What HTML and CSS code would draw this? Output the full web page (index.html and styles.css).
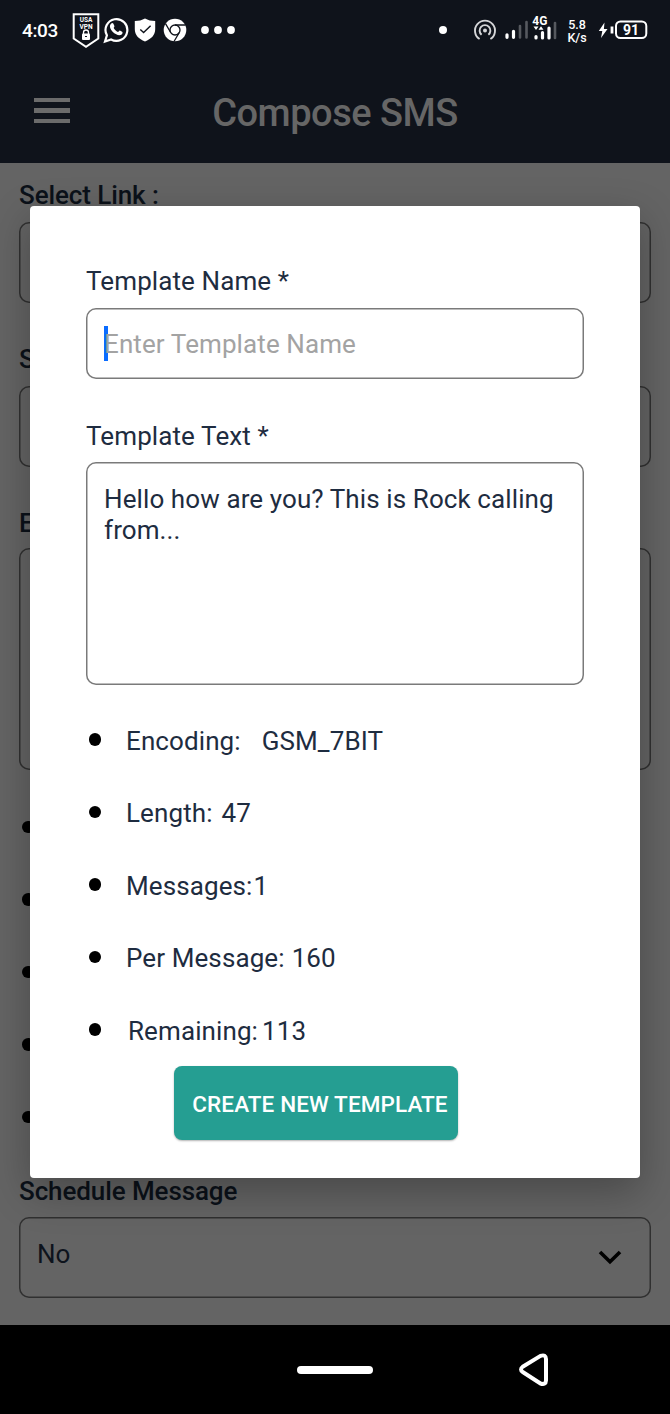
FILE: index.html
```html
<!DOCTYPE html>
<html lang="en">
<head>
    <meta charset="UTF-8">
    <title>Compose SMS</title>
    <link rel="stylesheet" href="styles.css">
</head>
<body>
    <div class="phone">
        <div class="status-bar">
            <span class="clock">4:03</span>
            <svg class="icon-vpn" width="28" height="36" viewBox="0 0 28 36">
                <path d="M1.7 1.2h24.6v24.3L14 33.8 1.7 25.500z" fill="none" stroke="#fff" stroke-width="2"/>
                <text x="14" y="9.300" class="vpn-text">USA</text>
                <text x="14" y="15.600" class="vpn-text">VPN</text>
                <path d="M11.500 21v-1.500a2.500 2.500 0 0 1 5 0V21" fill="none" stroke="#fff" stroke-width="1.300"/>
                <rect x="10" y="20.500" width="8" height="6.500" rx="1" fill="#fff"/>
                <path d="M13 23.500h2" stroke="#0f131b" stroke-width="1"/>
            </svg>
            <svg class="icon-whatsapp" width="26" height="28" viewBox="0 0 26 28">
                <path d="M2 25.500l1.900-6.200a10.900 10.900 0 1 1 4.200 4.200z" fill="none" stroke="#fff" stroke-width="2.200"/>
                <path d="M8.200 7.600c.8-.9 1.700-.8 2.200.1l1 2.200c.3.600-.9 1.700-.7 2.100 1 1.900 2.300 3.100 4.200 3.900.6.200 1.400-1.600 2-1.300l2.200 1.100c.8.400.5 2-.4 2.700-1.500 1.200-3.600.9-5.500-.100-2.700-1.400-4.900-3.700-6-6.400-.6-1.600-.2-3.200 1-4.300z" fill="#fff"/>
            </svg>
            <svg class="icon-shield" width="22" height="24" viewBox="0 0 22 24">
                <path d="M11 .6c3 1.700 6.300 2.500 10.200 2.500v8.200c0 5.800-4 9.800-10.200 12.200C4.800 21.100.8 17.100.8 11.300V3.100C4.700 3.100 8 2.300 11 .6z" fill="#fff"/>
                <path d="M6.300 11.500l3.300 3.100 7-6.900" fill="none" stroke="#0f131b" stroke-width="1.400"/>
            </svg>
            <svg class="icon-chrome" width="24" height="24" viewBox="0 0 24 24">
                <circle cx="12" cy="12" r="11.300" fill="#fff"/>
                <g fill="none" stroke="#0f131b" stroke-width="1.300">
                    <circle cx="12" cy="12" r="5"/>
                    <path d="M12 7h10.500M7.700 14.500L2.500 5.600M16.300 14.500L11 23.500"/>
                </g>
            </svg>
            <svg class="icon-more" width="36" height="8" viewBox="0 0 36 8" fill="#fff">
                <circle cx="4" cy="4" r="3.900"/>
                <circle cx="17" cy="4" r="3.900"/>
                <circle cx="30" cy="4" r="3.900"/>
            </svg>
            <span class="notch-dot"></span>
            <svg class="icon-hotspot" width="24" height="24" viewBox="0 0 24 24">
                <circle cx="12" cy="12.500" r="2" fill="#d5d6d8"/>
                <g fill="none" stroke="#d5d6d8" stroke-width="1.900">
                    <path d="M8.600 16.700a5.400 5.400 0 1 1 6.800 0"/>
                    <path d="M6.600 21a10 10 0 1 1 10.800 0"/>
                </g>
            </svg>
            <svg class="icon-signal" width="24" height="22" viewBox="0 0 24 22">
                <path d="M2 18.300v-2.500M8.500 18.300v-6" stroke="#fff" stroke-width="3.200" stroke-linecap="round"/>
                <path d="M15 18.500V7M21.500 18.500V3" stroke="#56595f" stroke-width="2.600" stroke-linecap="round"/>
            </svg>
            <svg class="icon-signal-4g" width="26" height="26" viewBox="0 0 26 26">
                <path d="M4 23v-1.500M10.500 23v-5.500M17 23V13" stroke="#fff" stroke-width="3.200" stroke-linecap="round"/>
                <path d="M23 23V8" stroke="#56595f" stroke-width="2.600" stroke-linecap="round"/>
                <text x="7.800" y="10" class="net-text">4G</text>
                <path d="M1.500 11.500h5L4 15zM6.500 14.700h5L9 11.200z" fill="#fff"/>
            </svg>
            <span class="speed">5.8<br>K/s</span>
            <svg class="icon-battery" width="50" height="20" viewBox="0 0 50 20">
                <path d="M6.500 2.500L.8 11h3.500l-1.300 7 6.500-9H5.900z" fill="#fff"/>
                <path d="M14 6.500v7" stroke="#fff" stroke-width="2.800"/>
                <rect x="18" y="1.500" width="30.300" height="16.500" rx="4.500" fill="none" stroke="#fff" stroke-width="2"/>
                <text x="33" y="14.700" class="battery-text">91</text>
            </svg>
        </div>

        <div class="header">
            <div class="menu"><span></span><span></span><span></span></div>
            <h1>Compose SMS</h1>
        </div>

        <div class="content">
            <div class="form-label">Select Link :</div>
            <div class="form-box"></div>
            <div class="form-label">S</div>
            <div class="form-box"></div>
            <div class="form-label">E</div>
            <div class="form-box message-box"></div>
            <ul class="page-list">
                <li></li>
                <li></li>
                <li></li>
                <li></li>
                <li></li>
            </ul>
            <div class="form-label schedule-label">Schedule Message</div>
            <div class="form-box">
                <span>No</span>
                <svg width="24" height="15" viewBox="0 0 24 15">
                    <path d="M2 2l10 9.800L22 2" fill="none" stroke="#000" stroke-width="3.600"/>
                </svg>
            </div>
        </div>

        <div class="nav-bar">
            <span class="home-pill"></span>
            <svg class="icon-back" width="30" height="34" viewBox="0 0 30 34">
                <path d="M21.500 2.900L3.700 13.800q-3.300 2.600 0 5.200l17.800 11.500q5.300 1.800 5.500-3.200V6q-.2-5-5.500-3.100z" fill="none" stroke="#fff" stroke-width="4" stroke-linejoin="round"/>
            </svg>
        </div>

        <div class="modal">
            <div class="modal-label">Template Name *</div>
            <div class="field name-field"><span class="caret"></span><span class="placeholder">Enter Template Name</span></div>
            <div class="modal-label">Template Text *</div>
            <div class="field text-field">Hello how are you? This is Rock calling from...</div>
            <ul class="info-list">
                <li><span class="name">Encoding:</span><span class="wide-gap">GSM_7BIT</span></li>
                <li><span class="name">Length:</span><span class="gap">47</span></li>
                <li><span class="name">Messages:</span><span class="tiny-gap">1</span></li>
                <li><span class="name">Per Message:</span><span class="mid-gap">160</span></li>
                <li><span class="name last">Remaining:</span><span class="small-gap">113</span></li>
            </ul>
            <button class="btn-create">CREATE NEW TEMPLATE</button>
        </div>
    </div>
</body>
</html>
```

FILE: styles.css
```css
* { box-sizing: border-box; }
body { margin: 0; font-family: Roboto, "Liberation Sans", sans-serif; color: #1e2c40; }
ul { list-style: none; margin: 0; padding: 0; }
.phone { position: relative; width: 670px; height: 1414px; overflow: hidden; background: #646464; display: flex; flex-direction: column; }

/* status bar */
.status-bar { height: 60px; background: #0f131b; color: #fff; display: flex; align-items: center; padding-left: 22px; flex-shrink: 0; }
.clock { width: 50px; font-size: 19px; font-weight: 500; letter-spacing: -0.4px; line-height: 20px; padding-top: 2px; }
.icon-vpn { margin-top: 1px; }
.vpn-text { font-size: 6.500px; font-weight: 700; fill: #fff; text-anchor: middle; }
.icon-whatsapp { margin-left: 3px; }
.icon-shield { margin-left: 5px; }
.icon-chrome { margin-left: 7px; }
.icon-more { margin-left: 14px; }
.notch-dot { width: 8px; height: 8px; border-radius: 50%; background: #fff; margin-left: 202px; }
.icon-hotspot { margin-left: 26px; }
.icon-signal { margin-left: 8px; }
.icon-signal-4g { margin-left: 3px; margin-top: -5px; }
.net-text { font-size: 12px; font-weight: 700; fill: #fff; text-anchor: middle; }
.speed { width: 24px; margin-left: 7px; padding-top: 1px; font-size: 12.500px; font-weight: 500; line-height: 13px; text-align: center; }
.icon-battery { margin-left: 9px; }
.battery-text { font-size: 14px; font-weight: 700; fill: #fff; text-anchor: middle; }

/* app header */
.header { height: 103px; background: #0f131b; display: flex; align-items: center; padding: 0 34px; flex-shrink: 0; }
.menu { width: 36px; display: flex; flex-direction: column; gap: 6px; margin-top: -2px; }
.menu span { height: 4.300px; background: #6b6b6b; }
.header h1 { flex: 1; margin: 3px 36px 0 0; font-size: 38px; font-weight: 500; text-align: center; color: #666; letter-spacing: -0.5px; }

/* dimmed form */
.content { height: 1162px; padding: 17px 19px 0; flex-shrink: 0; }
.form-label { height: 30px; line-height: 30px; margin-bottom: 12px; font-size: 26px; font-weight: 500; color: #0b1119; letter-spacing: -0.1px; }
.form-box { height: 81px; margin-bottom: 41px; padding: 0 29px 0 18px; border-radius: 10px; box-shadow: inset 0 0 0 1.500px #303030; display: flex; align-items: center; justify-content: space-between; font-size: 26px; color: #0d131c; }
.form-box span { margin-top: -7px; }
.message-box { height: 222px; margin-top: -2px; margin-bottom: 20.700px; }
.page-list li { height: 72.500px; display: flex; align-items: center; padding-left: 3px; }
.page-list li::before, .info-list li::before { content: ''; width: 12.500px; height: 12.500px; border-radius: 50%; background: #000; }
.schedule-label { margin-top: 22.700px; margin-bottom: 11px; }

/* navigation bar */
.nav-bar { flex: 1; background: #000; display: flex; align-items: center; padding-left: 297px; }
.home-pill { width: 76px; height: 8px; border-radius: 4px; background: #fff; }
.icon-back { margin-left: 146px; }

/* dialog over the form */
.modal { position: absolute; left: 30px; top: 206px; width: 610px; height: 971.500px; padding: 60px 56px 0; background: #fff; border-radius: 4px; box-shadow: 0 14px 40px rgba(0,0,0,0.28); font-size: 26px; letter-spacing: 0.1px; }
.modal-label { height: 30px; line-height: 30px; margin-bottom: 11.500px; }
.field { border-radius: 10px; box-shadow: inset 0 0 0 1.500px #7a7a7a; padding: 0 18px; }
.name-field { height: 71.500px; margin-bottom: 41.500px; display: flex; align-items: center; }
.caret { width: 3.500px; height: 35px; background: #0a6cff; margin-right: -3.500px; }
.placeholder { color: #a3a3a3; padding-top: 2px; }
.text-field { height: 222.500px; padding-top: 22px; line-height: 31px; }
.info-list { margin-top: 20px; }
.info-list li { height: 72.500px; display: flex; align-items: center; padding-left: 2.500px; }
.info-list li::before { margin-top: -3px; }
.name { margin-left: 25px; }
.name.last { margin-left: 27px; }
.gap { margin-left: 9px; }
.mid-gap { margin-left: 7px; }
.wide-gap { margin-left: 21px; }
.small-gap { margin-left: 4px; }
.tiny-gap { margin-left: 1px; }
.btn-create { display: block; width: 284px; height: 74px; margin: -1px 0 0 88px; padding: 1px 0 0 8px; border: none; border-radius: 8px; background: #259e92; box-shadow: 0 1px 2px rgba(0,0,0,0.3); color: #fff; font-family: inherit; font-size: 22.500px; font-weight: 500; letter-spacing: 0.1px; white-space: nowrap; }
```
